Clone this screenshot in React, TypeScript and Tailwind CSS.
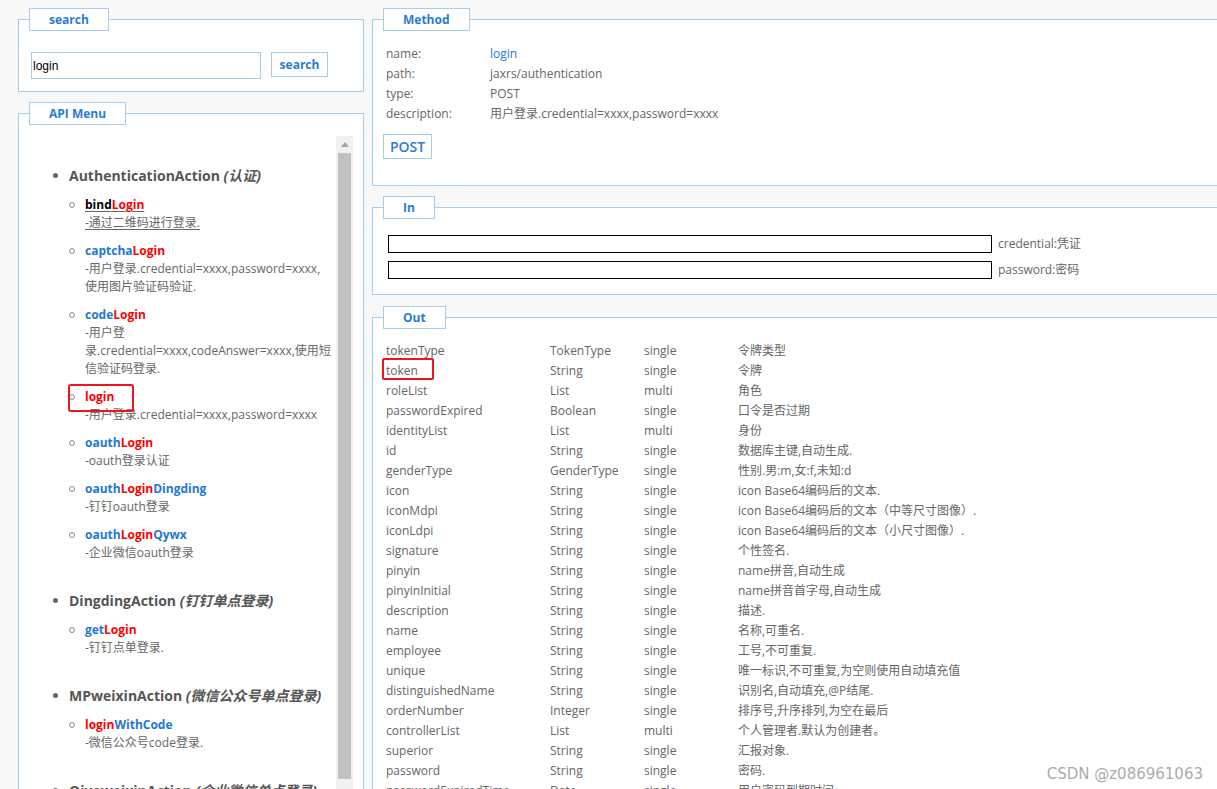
import { FC, ReactNode } from 'react'

type Part = [string, 'b' | 'r' | 'k']

interface MenuItem {
  parts: Part[]
  desc: string[]
  visited?: boolean
  marked?: boolean
}

interface MenuGroup {
  name: string
  label: string
  items: MenuItem[]
}

const groups: MenuGroup[] = [
  {
    name: 'AuthenticationAction',
    label: '(认证)',
    items: [
      { parts: [['bind', 'k'], ['Login', 'r']], desc: ['-通过二维码进行登录.'], visited: true },
      {
        parts: [['captcha', 'b'], ['Login', 'r']],
        desc: ['-用户登录.credential=xxxx,password=xxxx,', '使用图片验证码验证.'],
      },
      {
        parts: [['code', 'b'], ['Login', 'r']],
        desc: ['-用户登', '录.credential=xxxx,codeAnswer=xxxx,使用短', '信验证码登录.'],
      },
      { parts: [['login', 'r']], desc: ['-用户登录.credential=xxxx,password=xxxx'], marked: true },
      { parts: [['oauth', 'b'], ['Login', 'r']], desc: ['-oauth登录认证'] },
      { parts: [['oauth', 'b'], ['Login', 'r'], ['Dingding', 'b']], desc: ['-钉钉oauth登录'] },
      { parts: [['oauth', 'b'], ['Login', 'r'], ['Qywx', 'b']], desc: ['-企业微信oauth登录'] },
    ],
  },
  {
    name: 'DingdingAction',
    label: '(钉钉单点登录)',
    items: [{ parts: [['get', 'b'], ['Login', 'r']], desc: ['-钉钉点单登录.'] }],
  },
  {
    name: 'MPweixinAction',
    label: '(微信公众号单点登录)',
    items: [{ parts: [['login', 'r'], ['WithCode', 'b']], desc: ['-微信公众号code登录.'] }],
  },
  {
    name: 'QiyeweixinAction',
    label: '(企业微信单点登录)',
    items: [{ parts: [['get', 'b'], ['Login', 'r']], desc: ['-企业微信单点登录.'] }],
  },
]

const outRows: [string, string, string, string][] = [
  ['tokenType', 'TokenType', 'single', '令牌类型'],
  ['token', 'String', 'single', '令牌'],
  ['roleList', 'List', 'multi', '角色'],
  ['passwordExpired', 'Boolean', 'single', '口令是否过期'],
  ['identityList', 'List', 'multi', '身份'],
  ['id', 'String', 'single', '数据库主键,自动生成.'],
  ['genderType', 'GenderType', 'single', '性别.男:m,女:f,未知:d'],
  ['icon', 'String', 'single', 'icon Base64编码后的文本.'],
  ['iconMdpi', 'String', 'single', 'icon Base64编码后的文本（中等尺寸图像）.'],
  ['iconLdpi', 'String', 'single', 'icon Base64编码后的文本（小尺寸图像）.'],
  ['signature', 'String', 'single', '个性签名.'],
  ['pinyin', 'String', 'single', 'name拼音,自动生成'],
  ['pinyinInitial', 'String', 'single', 'name拼音首字母,自动生成'],
  ['description', 'String', 'single', '描述.'],
  ['name', 'String', 'single', '名称,可重名.'],
  ['employee', 'String', 'single', '工号,不可重复.'],
  ['unique', 'String', 'single', '唯一标识,不可重复,为空则使用自动填充值'],
  ['distinguishedName', 'String', 'single', '识别名,自动填充,@P结尾.'],
  ['orderNumber', 'Integer', 'single', '排序号,升序排列,为空在最后'],
  ['controllerList', 'List', 'multi', '个人管理者.默认为创建者。'],
  ['superior', 'String', 'single', '汇报对象.'],
  ['password', 'String', 'single', '密码.'],
  ['passwordExpiredTime', 'Date', 'single', '用户密码到期时间'],
]

const partColor = {
  b: 'text-[#2377d6]',
  r: 'text-[#ff0000]',
  k: 'text-black',
}

// 带标题的分组框
const Box: FC<{ title: string; className?: string; inner?: string; children: ReactNode }> = ({
  title,
  className,
  inner,
  children,
}) => (
  <fieldset className={`min-w-0 border border-[#a6cdf0] bg-white ${className ?? ''}`}>
    <legend className="ml-[10px] border border-[#a6cdf0] bg-white px-[19px] text-[12px] leading-[21px] font-bold text-[#2a7bd5]">
      {title}
    </legend>
    <div className={inner}>{children}</div>
  </fieldset>
)

const Item: FC<{ item: MenuItem }> = ({ item }) => (
  <div className="mb-[10px] flex pl-[50px]">
    <div className="flex h-[18px] w-[16px] shrink-0 items-center">
      <span className="h-[6px] w-[6px] rounded-full border border-[#8a8a8a]" />
    </div>
    <div className={`relative ${item.visited ? 'underline decoration-1 underline-offset-2' : ''}`}>
      <div className="text-[12px] leading-[18px] font-bold whitespace-nowrap">
        {item.parts.map(([t, c], i) => (
          <span key={i} className={partColor[c]}>
            {t}
          </span>
        ))}
      </div>
      {item.desc.map((line, i) => (
        <div key={i} className="text-[12px] leading-[18px] whitespace-nowrap text-[#666]">
          {line}
        </div>
      ))}
      {item.marked && (
        <span className="absolute top-[-4px] left-[-17px] h-[28px] w-[66px] rounded-[3px] border-2 border-[#f0141e]" />
      )}
    </div>
  </div>
)

const App: FC = () => {
  return (
    <div className="relative flex h-[789px] w-[1217px] overflow-hidden bg-[#f8f8f8] pt-[8px] pl-[18px] font-['Open_Sans','Noto_Sans_CJK_SC',sans-serif] text-[#666]">
      {/* 左侧 */}
      <div className="flex w-[346px] shrink-0 flex-col">
        <Box title="search" inner="pt-[21px] pb-[12px] pl-[12px]">
          <div className="flex items-start">
            <input
              readOnly
              value="login"
              className="h-[27px] w-[230px] border border-[#a6cdf0] bg-white pl-[1px] font-['Liberation_Sans',sans-serif] text-[12px] text-black outline-none"
            />
            <button className="ml-[10px] h-[25px] w-[57px] border border-[#a6cdf0] bg-white text-[12px] font-bold text-[#2a7bd5]">
              search
            </button>
          </div>
        </Box>

        <Box title="API Menu" className="mt-[10px] h-[760px]" inner="pt-[11px] pr-[10px]">
          <div className="flex h-[720px]">
            <div className="w-[317px] overflow-hidden pt-[29px]">
              {groups.map((g) => (
                <div key={g.name} className="mb-[28px]">
                  <div className="flex h-[20px] items-center pl-[34px]">
                    <span className="h-[5px] w-[5px] rounded-full bg-[#666]" />
                    <span className="ml-[11px] text-[14px] font-bold whitespace-nowrap text-[#555]">
                      {g.name} <i>{g.label}</i>
                    </span>
                  </div>
                  <div className="mt-[11px]">
                    {g.items.map((it, i) => (
                      <Item key={i} item={it} />
                    ))}
                  </div>
                </div>
              ))}
            </div>
            {/* 滚动条 */}
            <div className="flex w-[17px] flex-col bg-[#f1f1f1]">
              <div className="flex h-[17px] items-center justify-center">
                <svg width="8" height="5" viewBox="0 0 8 5">
                  <path d="M4 0 L8 5 L0 5 Z" fill="#a3a3a3" />
                </svg>
              </div>
              <div className="mx-[2px] h-[626px] bg-[#c1c1c1]" />
            </div>
          </div>
        </Box>
      </div>

      {/* 右侧 */}
      <div className="ml-[8px] flex w-[900px] shrink-0 flex-col">
        <Box title="Method" inner="pt-[13px] pb-[26px] pl-[10px]">
          <div className="grid grid-cols-[104px_1fr] pl-[3px] text-[12px] leading-[20px]">
            <span>name:</span>
            <span className="text-[#2377d6]">login</span>
            <span>path:</span>
            <span>jaxrs/authentication</span>
            <span>type:</span>
            <span>POST</span>
            <span>description:</span>
            <span>用户登录.credential=xxxx,password=xxxx</span>
          </div>
          <button className="mt-[10px] h-[25px] w-[49px] border border-[#a6cdf0] bg-white text-[14px] font-semibold text-[#2a7bd5]">
            POST
          </button>
        </Box>

        <Box title="In" className="mt-[10px]" inner="pt-[16px] pb-[15px] pl-[15px]">
          <div className="flex flex-col gap-[8px] text-[12px]">
            <div className="flex items-center">
              <div className="h-[18px] w-[604px] border border-black bg-white" />
              <span className="ml-[6px]">credential:凭证</span>
            </div>
            <div className="flex items-center">
              <div className="h-[18px] w-[604px] border border-black bg-white" />
              <span className="ml-[6px]">password:密码</span>
            </div>
          </div>
        </Box>

        <Box title="Out" className="mt-[11px] h-[520px]" inner="pt-[12px] pl-[13px]">
          <div className="grid grid-cols-[164px_94px_94px_1fr] text-[12px] leading-[20px] whitespace-nowrap">
            {outRows.map(([n, t, m, d]) => (
              <div key={n} className="contents">
                <span className="relative">
                  {n}
                  {n === 'token' && (
                    <span className="absolute top-[-3px] left-[-4px] h-[22px] w-[52px] rounded-[2px] border-2 border-[#f0141e]" />
                  )}
                </span>
                <span>{t}</span>
                <span>{m}</span>
                <span>{d}</span>
              </div>
            ))}
          </div>
        </Box>
      </div>

      {/* 水印 */}
      <div className="absolute top-[763px] right-[14px] font-['DejaVu_Sans',sans-serif] text-[15px] text-[#ababab]">
        CSDN @z086961063
      </div>
    </div>
  )
}

export default App
